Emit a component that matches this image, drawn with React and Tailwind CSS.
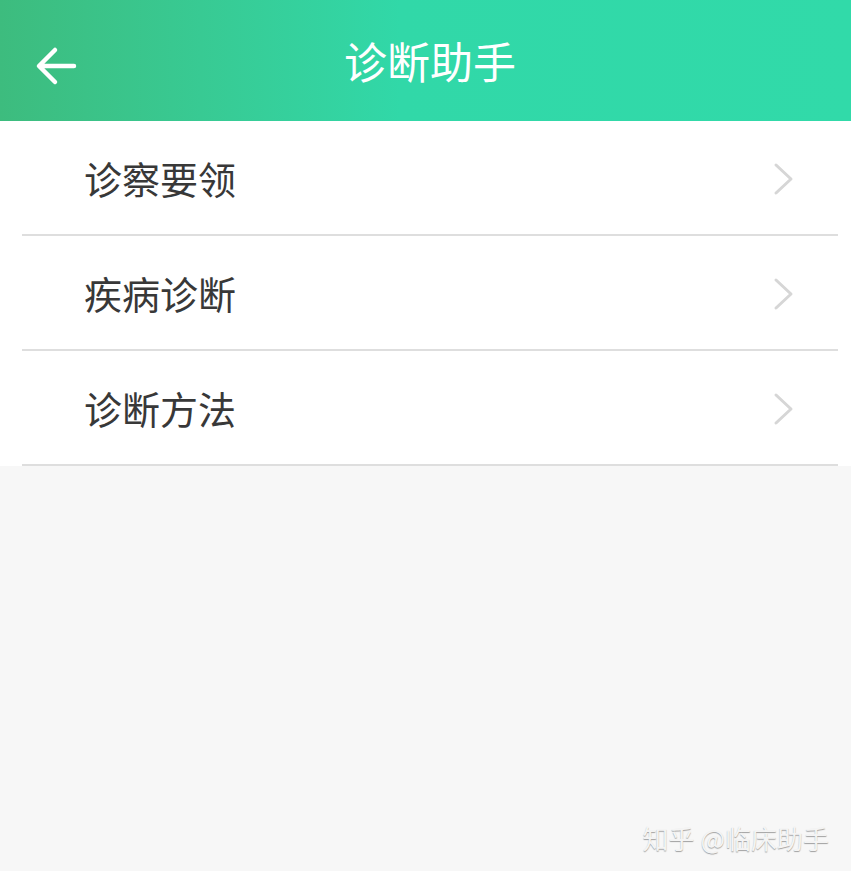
import React from "react";

const items = ["诊察要领", "疾病诊断", "诊断方法"];

function Chevron() {
  return (
    <svg width="24" height="34" viewBox="0 0 24 34" fill="none">
      <path d="M4 3 L19 17 L4 31" stroke="#d6d6d6" strokeWidth="3" strokeLinecap="round" strokeLinejoin="round" />
    </svg>
  );
}

export default function App() {
  return (
    <div
      className="w-[851px] h-[871px] bg-[#f7f7f7] flex flex-col relative overflow-hidden"
      style={{ fontFamily: '"Noto Sans CJK SC", "Noto Sans", sans-serif' }}
    >
      <div className="h-[121px] shrink-0 bg-gradient-to-r from-[#3dbc7e] via-[#31d8a8] via-[47%] to-[#31daa9] flex items-center relative">
        <div className="absolute left-[34px] top-[45px]">
          <svg width="44" height="42" viewBox="0 0 44 42" fill="none">
            <path d="M40 21 H6 M21 5 L5 21 L21 37" stroke="white" strokeWidth="4.5" strokeLinecap="round" strokeLinejoin="round" />
          </svg>
        </div>
        <div className="w-full text-center text-white text-[43px] leading-none pl-[9px]">诊断助手</div>
      </div>
      <div className="bg-white">
        {items.map((t, i) => (
          <div key={i} className="h-[115px] ml-[22px] mr-[13px] flex items-center justify-between border-b-2 border-[#dedede]">
            <span className="pl-[62px] text-[38px] text-[#383838] leading-none">{t}</span>
            <span className="pr-[42px] flex items-center pt-[2px]">
              <Chevron />
            </span>
          </div>
        ))}
      </div>
      <div
        className="absolute right-[22px] bottom-[20px] text-[26px] text-[#f4f4f4] leading-none"
        style={{ textShadow: "0 1px 1px rgba(0,0,0,0.35)" }}
      >
        知乎 @临床助手
      </div>
    </div>
  );
}
